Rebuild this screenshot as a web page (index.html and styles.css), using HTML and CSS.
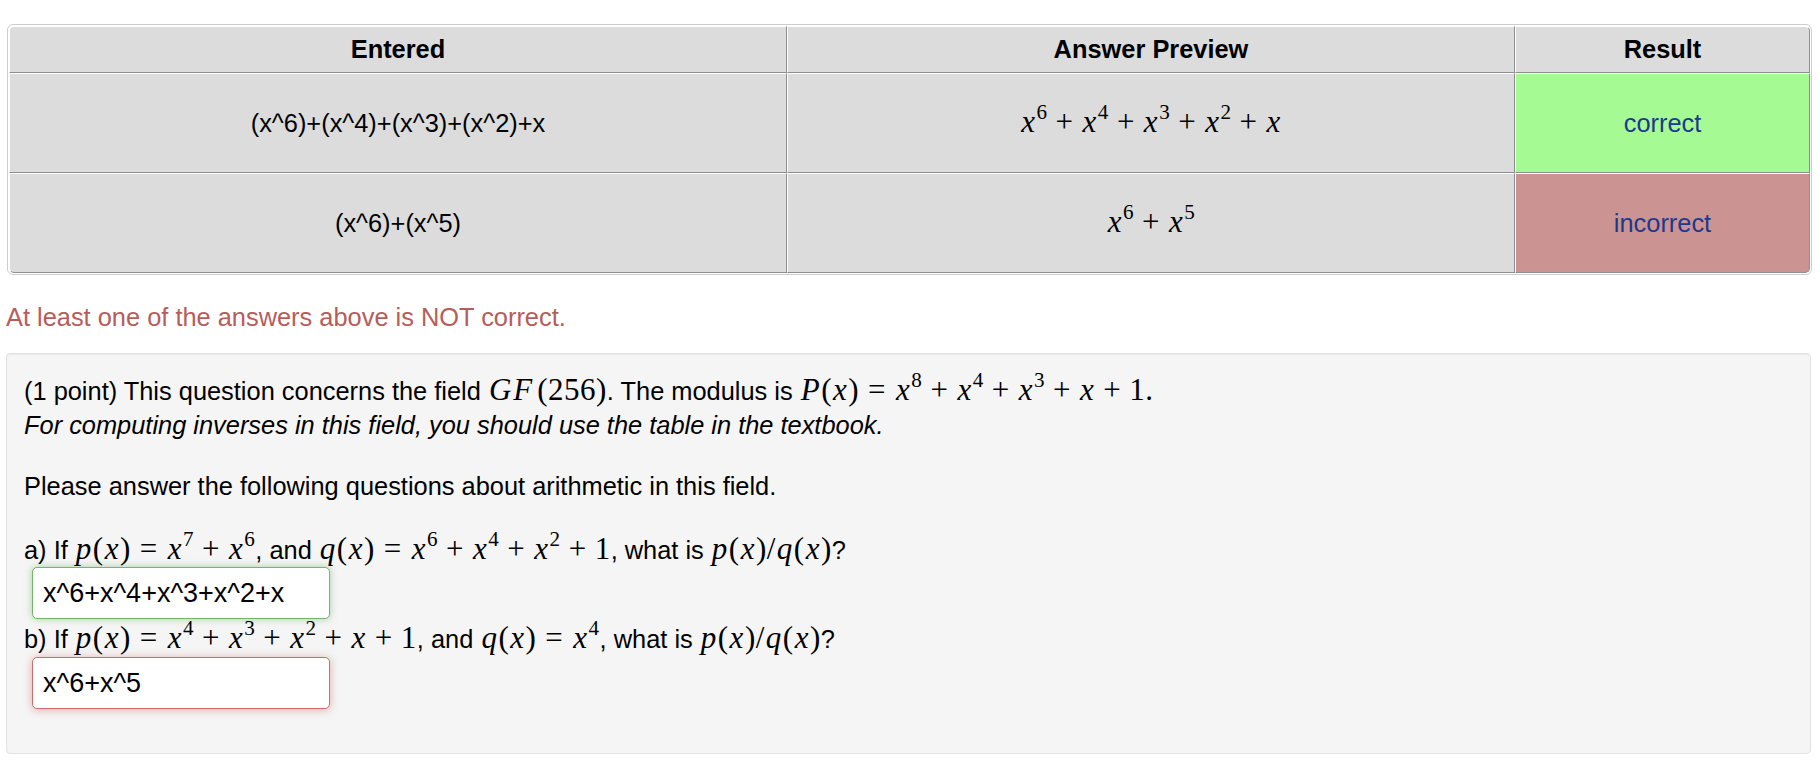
FILE: index.html
```html
<!doctype html>
<html>
<head>
<meta charset="UTF-8">
<title>Attempt results</title>
<link rel="stylesheet" href="styles.css">
</head>
<body>
<table class="attempt">
	<tr>
		<th class="c-entered">Entered</th>
		<th class="c-preview">Answer Preview</th>
		<th class="c-result">Result</th>
	</tr>
	<tr class="row">
		<td>(x^6)+(x^4)+(x^3)+(x^2)+x</td>
		<td><span class="m"><i>x</i><sup>6</sup><b class="op">+</b><i>x</i><sup>4</sup><b class="op">+</b><i>x</i><sup>3</sup><b class="op">+</b><i>x</i><sup>2</sup><b class="op">+</b><i>x</i></span></td>
		<td class="ok">correct</td>
	</tr>
	<tr class="row">
		<td>(x^6)+(x^5)</td>
		<td><span class="m"><i>x</i><sup>6</sup><b class="op">+</b><i>x</i><sup>5</sup></span></td>
		<td class="bad">incorrect</td>
	</tr>
</table>

<div class="warn">At least one of the answers above is NOT correct.</div>

<div class="well">
	<div class="q tall">(1 point) This question concerns the field <span class="m"><i class="gf">GF</i>(256)</span>. The modulus is <span class="m"><i>P</i>(<i>x</i>)<b class="eq">=</b><i>x</i><sup>8</sup><b class="op">+</b><i>x</i><sup>4</sup><b class="op">+</b><i>x</i><sup>3</sup><b class="op">+</b><i>x</i><b class="op">+</b>1.</span></div>
	<div class="q"><em>For computing inverses in this field, you should use the table in the textbook.</em></div>
	<div class="q gap">Please answer the following questions about arithmetic in this field.</div>
	<div class="q tall gap">a) If <span class="m"><i>p</i>(<i>x</i>)<b class="eq">=</b><i>x</i><sup>7</sup><b class="op">+</b><i>x</i><sup>6</sup></span>, and <span class="m"><i>q</i>(<i>x</i>)<b class="eq">=</b><i>x</i><sup>6</sup><b class="op">+</b><i>x</i><sup>4</sup><b class="op">+</b><i>x</i><sup>2</sup><b class="op">+</b>1</span>, what is <span class="m"><i>p</i>(<i>x</i>)/<i>q</i>(<i>x</i>)</span>?</div>
	<input class="ans ans-ok" type="text" value="x^6+x^4+x^3+x^2+x">
	<div class="q tall b-line">b) If <span class="m"><i>p</i>(<i>x</i>)<b class="eq">=</b><i>x</i><sup>4</sup><b class="op">+</b><i>x</i><sup>3</sup><b class="op">+</b><i>x</i><sup>2</sup><b class="op">+</b><i>x</i><b class="op">+</b>1</span>, and <span class="m"><i>q</i>(<i>x</i>)<b class="eq">=</b><i>x</i><sup>4</sup></span>, what is <span class="m"><i>p</i>(<i>x</i>)/<i>q</i>(<i>x</i>)</span>?</div>
	<input class="ans ans-bad" type="text" value="x^6+x^5">
</div>
</body>
</html>
```

FILE: styles.css
```css
*{box-sizing:border-box;}
body{margin:0;padding:24px 9px 0 6px;font-family:"Liberation Sans",Arial,sans-serif;font-size:25.4px;color:#000;background:#fff;}

/* results table */
.attempt{width:100%;margin-left:1px;border-collapse:separate;border-spacing:0;border:1px solid #cdcdcd;border-radius:6px;padding:1px;table-layout:fixed;}
.attempt th,.attempt td{background:#dcdcdc;text-align:center;vertical-align:middle;padding:0;border:1px solid;border-color:#fff #8e8e8e #8e8e8e #fff;}
.attempt th{height:47px;font-weight:bold;}
.attempt .row td{height:100px;}
.attempt .c-entered{width:778px;}
.attempt .c-preview{width:728px;}
.attempt tr:first-child th:first-child{border-top-left-radius:5px;}
.attempt tr:first-child th:last-child{border-top-right-radius:5px;}
.attempt tr:last-child td:first-child{border-bottom-left-radius:5px;}
.attempt tr:last-child td:last-child{border-bottom-right-radius:5px;}
.attempt td.ok{background:#a6fa93;color:#1b3a8c;}
.attempt td.bad{background:#cc9393;color:#1b3a8c;}

/* math */
.m{font-family:"Liberation Serif","DejaVu Serif",serif;font-size:31px;line-height:0;white-space:nowrap;letter-spacing:0.5px;}
.m i{font-style:italic;padding:0 1px;}
.m i.gf{padding:0 3px 0 1px;letter-spacing:2px;}
.m b{font-weight:normal;}
.m .op{margin:0 8px;}
.m .eq{margin:0 9px;}
.m sup{font-size:0.68em;vertical-align:0.62em;line-height:0;}

.warn{margin:27px 0 20px;line-height:31px;color:#b65d59;}

/* problem */
.well{background:#f5f5f5;border:1px solid #e3e3e3;border-radius:4px;box-shadow:inset 0 1px 1px rgba(0,0,0,.05);padding:19px 17px 44px;}
.q{line-height:31px;}
.q.tall{line-height:37px;}
.q.b-line{line-height:40px;}
.q.gap{margin-top:30px;}
.ans{display:block;width:298px;height:52px;margin:-2px 0 0 8px;padding:0 10px;font-family:"Liberation Sans",Arial,sans-serif;font-size:27px;color:#000;background:#fff;border-radius:5px;outline:none;}
.ans-ok{border:1px solid #74b569;box-shadow:0 0 7px rgba(90,170,80,.5);}
.ans-bad{border:1px solid #cc6d6d;box-shadow:0 1px 9px rgba(200,70,70,.42);}
```
